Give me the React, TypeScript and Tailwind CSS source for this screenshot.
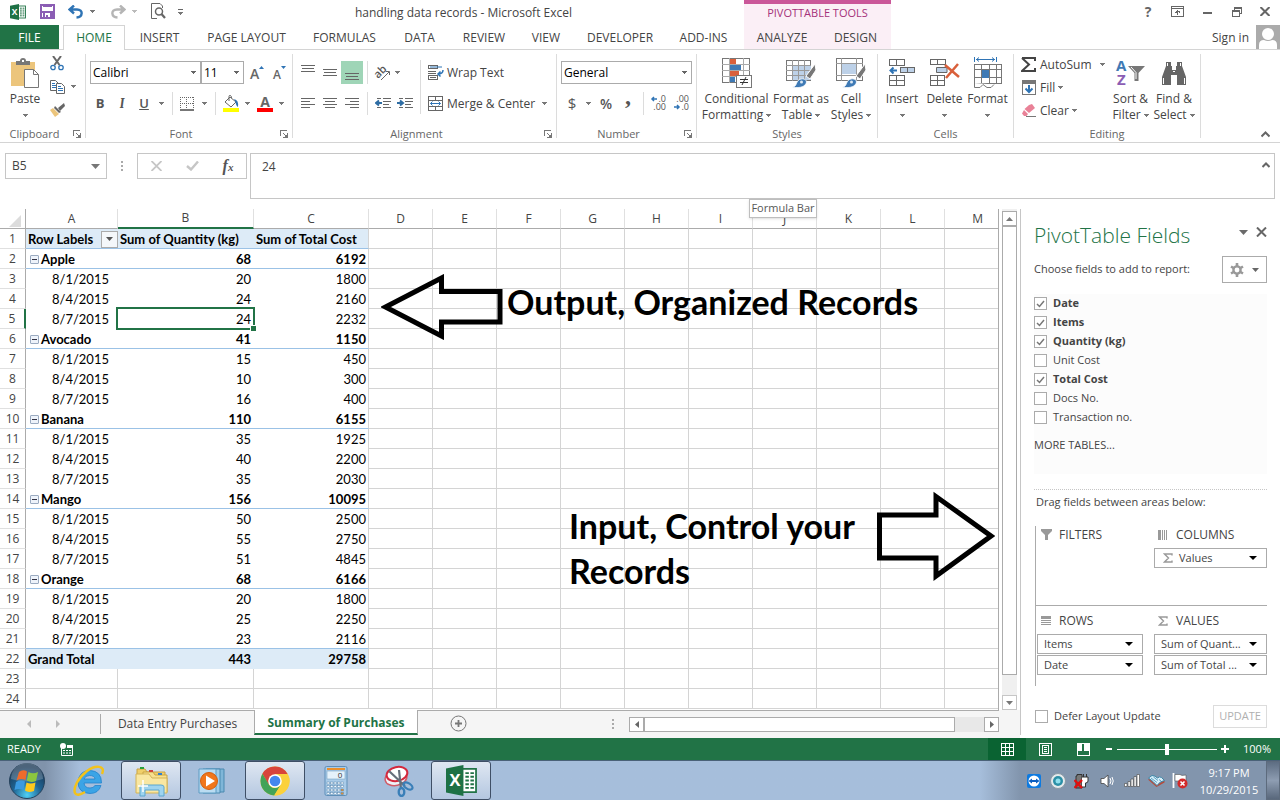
import React, { useState } from 'react';

const tabs = [
  { name: 'INSERT', width: 'w-[69px]' },
  { name: 'PAGE LAYOUT', width: 'w-[105px]' },
  { name: 'FORMULAS', width: 'w-[91px]' },
  { name: 'DATA', width: 'w-[59px]' },
  { name: 'REVIEW', width: 'w-[70px]' },
  { name: 'VIEW', width: 'w-[54px]' },
  { name: 'DEVELOPER', width: 'w-[94px]' },
  { name: 'ADD-INS', width: 'w-[73px]' },
];

const extraColumns = ['D', 'E', 'F', 'G', 'H', 'I', 'J', 'K', 'L', 'M'];

type Row = { kind: 'header' | 'group' | 'item' | 'total' | 'blank'; cells: string[] };

const rows: Row[] = [
  { kind: 'header', cells: ['Row Labels', 'Sum of Quantity (kg)', 'Sum of Total Cost'] },
  { kind: 'group', cells: ['Apple', '68', '6192'] },
  { kind: 'item', cells: ['8/1/2015', '20', '1800'] },
  { kind: 'item', cells: ['8/4/2015', '24', '2160'] },
  { kind: 'item', cells: ['8/7/2015', '24', '2232'] },
  { kind: 'group', cells: ['Avocado', '41', '1150'] },
  { kind: 'item', cells: ['8/1/2015', '15', '450'] },
  { kind: 'item', cells: ['8/4/2015', '10', '300'] },
  { kind: 'item', cells: ['8/7/2015', '16', '400'] },
  { kind: 'group', cells: ['Banana', '110', '6155'] },
  { kind: 'item', cells: ['8/1/2015', '35', '1925'] },
  { kind: 'item', cells: ['8/4/2015', '40', '2200'] },
  { kind: 'item', cells: ['8/7/2015', '35', '2030'] },
  { kind: 'group', cells: ['Mango', '156', '10095'] },
  { kind: 'item', cells: ['8/1/2015', '50', '2500'] },
  { kind: 'item', cells: ['8/4/2015', '55', '2750'] },
  { kind: 'item', cells: ['8/7/2015', '51', '4845'] },
  { kind: 'group', cells: ['Orange', '68', '6166'] },
  { kind: 'item', cells: ['8/1/2015', '20', '1800'] },
  { kind: 'item', cells: ['8/4/2015', '25', '2250'] },
  { kind: 'item', cells: ['8/7/2015', '23', '2116'] },
  { kind: 'total', cells: ['Grand Total', '443', '29758'] },
  { kind: 'blank', cells: ['', '', ''] },
  { kind: 'blank', cells: ['', '', ''] },
];

const initialFields = [
  { name: 'Date', checked: true },
  { name: 'Items', checked: true },
  { name: 'Quantity (kg)', checked: true },
  { name: 'Unit Cost', checked: false },
  { name: 'Total Cost', checked: true },
  { name: 'Docs No.', checked: false },
  { name: 'Transaction no.', checked: false },
];

/* ---------- small shared pieces ---------- */

const Caret = ({ className = 'text-[#777]' }: { className?: string }) => (
  <svg width="5" height="3" viewBox="0 0 5 3" className={`shrink-0 ${className}`} shapeRendering="crispEdges">
    <path d="M0 0H5V1H4V2H3V3H2V2H1V1H0Z" fill="currentColor" />
  </svg>
);

const BigCaret = ({ className = 'text-[#6a6a6a]' }: { className?: string }) => (
  <svg width="9" height="5" viewBox="0 0 9 5" className={`shrink-0 ${className}`}>
    <path d="M0 0H9L4.5 5Z" fill="currentColor" />
  </svg>
);

const CaretButton = ({ label, className }: { label: string; className: string }) => (
  <button aria-label={label} className={`flex h-[23px] shrink-0 items-center justify-center ${className}`}>
    <Caret />
  </button>
);

const IconButton = ({ label, className = '', children }: { label: string; className?: string; children: React.ReactNode }) => (
  <button aria-label={label} className={`flex h-[23px] shrink-0 items-center justify-center ${className}`}>
    {children}
  </button>
);

const Divider = ({ className = '' }: { className?: string }) => <span className={`w-px shrink-0 bg-[#dcdcdc] ${className}`} />;

const Combo = ({ label, value, className }: { label: string; value: string; className: string }) => (
  <div className={`relative flex h-[23px] shrink-0 items-center border border-[#ababab] bg-white ${className}`}>
    <select aria-label={label} defaultValue={value} className="h-full w-full appearance-none bg-transparent pl-[2px] text-xs text-black outline-none">
      <option>{value}</option>
    </select>
    <Caret className="pointer-events-none absolute right-1 text-[#666]" />
  </div>
);

const Group = ({ title, launcher, className, children }: { title: string; launcher?: boolean; className: string; children: React.ReactNode }) => (
  <>
    <section aria-label={title} className={`flex shrink-0 flex-col ${className}`}>
      <div className="flex h-[76px]">{children}</div>
      <div className="flex h-4 items-center text-[11px] text-[#666]">
        <span className="flex-1 text-center">{title}</span>
        {launcher && (
          <button aria-label={`${title} settings`} className="flex w-4 justify-center">
            <svg width="8" height="8" viewBox="0 0 8 8" fill="none" stroke="#777" shapeRendering="crispEdges">
              <path d="M0.5 6V0.5H7M3 3L6 6M7.5 3V7.5H3" />
              <path d="M7 4V7H4Z" fill="#777" stroke="none" />
            </svg>
          </button>
        )}
      </div>
    </section>
    <Divider className="my-1" />
  </>
);

const BigButton = ({ lines, className, children }: { lines: string[]; className: string; children: React.ReactNode }) => (
  <button className={`flex shrink-0 flex-col items-center whitespace-nowrap pt-2 text-xs leading-4 text-[#444] ${className}`}>
    <span className="mb-[3px] flex h-[30px] items-center">{children}</span>
    <span>{lines[0]}</span>
    <span className="flex h-4 items-center gap-[3px]">
      {lines[1]}
      <Caret />
    </span>
  </button>
);

/* ---------- icons ---------- */

const ExcelLogo = ({ size }: { size: number }) => (
  <svg width={size} height={size} viewBox="0 0 16 16">
    <rect x="8" y="2" width="7.5" height="12" fill="#fff" stroke="#217346" strokeWidth="0.9" />
    <path d="M10 4.2h1.8M12.6 4.2h1.8M10 6.1h1.8M12.6 6.1h1.8M10 8h1.8M12.6 8h1.8M10 9.9h1.8M12.6 9.9h1.8M10 11.8h1.8M12.6 11.8h1.8" stroke="#217346" strokeWidth="1" />
    <path d="M0 1.8L9 0V16L0 14.2Z" fill="#1e7145" />
    <text x="4.6" y="11" fontSize="8.5" fontWeight="700" textAnchor="middle" fill="#fff">X</text>
  </svg>
);

const AlignIcon = ({ lines }: { lines: [number, number][] }) => (
  <svg width="14" height="11" viewBox="0 0 14 11" shapeRendering="crispEdges">
    {lines.map(([x, w], i) => (
      <rect key={i} x={x} y={i * 3} width={w} height="1" fill="#666" />
    ))}
  </svg>
);

const ThreeLines = () => (
  <svg width="14" height="7" viewBox="0 0 14 7" shapeRendering="crispEdges">
    <path d="M0 0.5H14M1 3.5H13M0 6.5H14" stroke="#666" />
  </svg>
);

const IndentIcon = ({ flip }: { flip?: boolean }) => (
  <svg width="16" height="11" viewBox="0 0 16 11">
    <path d="M2 0.5H6M8 0.5H16M8 3.5H16M8 6.5H14M2 9.5H6M8 9.5H16" stroke="#666" shapeRendering="crispEdges" />
    <path d={flip ? 'M0 5H5M3 2.5L6 5L3 7.5' : 'M7 5H2M4 2.5L1 5L4 7.5'} stroke="#2e6da4" strokeWidth="2" fill="none" />
  </svg>
);

const Brush = () => (
  <>
    <path d="M29 6L20 18L24 21L30 12Z" fill="#777" stroke="#fff" />
    <path d="M6 29C12 29 9 22 15 21C20 20 22 24 19 27C16 30 10 30 6 29Z" fill="#3f7ab5" stroke="#fff" strokeWidth="0.8" />
    <circle cx="15.5" cy="24" r="1.5" fill="#dce8f4" />
  </>
);

const StartOrb = () => (
  <svg width="38" height="38" viewBox="0 0 38 38">
    <defs>
      <radialGradient id="orb" cx="50%" cy="90%" r="80%">
        <stop offset="0" stopColor="#4fd0f5" />
        <stop offset="0.5" stopColor="#1f6493" />
        <stop offset="1" stopColor="#1a3957" />
      </radialGradient>
    </defs>
    <circle cx="19" cy="19" r="17.5" fill="url(#orb)" stroke="#26425c" />
    <path d="M3 17A16 16 0 0 1 35 17Q19 22 3 17Z" fill="#fff" opacity="0.22" />
    <path d="M11 10Q15 7 19 9.5L17.5 18Q13 16 8.5 18.5Z" fill="#ee6b2c" />
    <path d="M20.5 10Q25 12.500 30 10L28 19Q23 21 18.8 18.5Z" fill="#8cc63f" />
    <path d="M8 20Q12.5 17.5 17 19.5L15.5 28Q11 26 6.500 28Z" fill="#3b9ae0" />
    <path d="M18.5 20.5Q22.500 22.5 27.5 20.5L26 29Q20 31 17 28.5Z" fill="#fcc91d" />
  </svg>
);

const IELogo = () => (
  <svg width="32" height="32" viewBox="0 0 32 32">
    <path d="M28.5 18H11Q11.5 23 17 23Q20.5 23 22 20.5H28Q25.5 28.5 17 28.5Q5 28 5 17Q6 5.5 17 5.5Q28.5 6 28.5 18ZM11 14H22Q21.5 10.5 16.5 10.5Q12 10.5 11 14Z" fill="#3ba4e6" stroke="#2383cb" strokeWidth="0.8" />
    <path d="M29 9C33 0 22 0 14 6C5 13 0 23 2 28C4 32 10 28 12 27" fill="none" stroke="#f2c21b" strokeWidth="2.5" />
  </svg>
);

const ExplorerIcon = () => (
  <svg width="34" height="32" viewBox="0 0 34 32">
    <path d="M3 4H11L13 7H31V26H3Z" fill="#f0cf6a" stroke="#c9a343" />
    <path d="M9 7H19L21 10H33V27H9Z" fill="#f7e08f" stroke="#c9a343" />
    <rect x="6" y="2" width="4" height="2" fill="#27a03c" />
    <rect x="15" y="5" width="4" height="2" fill="#d0413a" />
    <rect x="24" y="8" width="4" height="2" fill="#2d7fd3" />
    <path d="M2 9H15L18 13H33V28H2Z" fill="#f9e7a2" stroke="#d3b357" />
    <path d="M6 31V22Q6 20 9 20H27Q30 20 30 22V31H25V25H11V31Z" fill="#9fd4ef" stroke="#5ba6cf" />
    <path d="M9 15V27M4 21H14" stroke="#fff" strokeWidth="1.5" />
  </svg>
);

const MediaIcon = () => (
  <svg width="30" height="28" viewBox="0 0 30 28">
    <path d="M8 2H26V25H8Z" fill="#7fb6d8" stroke="#4b89b0" />
    <path d="M5 2H22V26H5Z" fill="#9fcdea" stroke="#4b89b0" />
    <path d="M1 2H18V26H1Z" fill="#badcf2" stroke="#5d9cc3" />
    <circle cx="11" cy="14" r="8.5" fill="#f0761b" stroke="#d65f0c" />
    <path d="M8 8.5L17 14L8 19.5Z" fill="#fff" />
  </svg>
);

const ChromeLogo = () => (
  <svg width="30" height="30" viewBox="0 0 30 30">
    <circle cx="15" cy="15" r="14.5" fill="#fbd13c" />
    <path d="M2.4 7.8A14.5 14.5 0 0 1 27.7 8.2H15L8.7 18.7Z" fill="#d8443a" />
    <path d="M2.4 7.8A14.5 14.5 0 0 0 14.2 29.5L21 18.5A7 7 0 0 1 8.9 18.6Z" fill="#43a358" />
    <path d="M15 8H27.7A14.5 14.5 0 0 1 14.2 29.5L21 18.5Z" fill="#fbd13c" />
    <circle cx="15" cy="15" r="6.8" fill="#fff" />
    <circle cx="15" cy="15" r="5.3" fill="#4587ee" />
  </svg>
);

const CalcIcon = () => (
  <svg width="24" height="30" viewBox="0 0 24 30">
    <rect x="1" y="0.5" width="22" height="29" rx="1.5" fill="#a9cbe8" stroke="#5e8fb8" />
    <rect x="3" y="2" width="18" height="2" fill="#e98f2d" />
    <rect x="3" y="5" width="18" height="8" fill="#e6f2fb" stroke="#7ba3c4" strokeWidth="0.6" />
    <text x="16" y="12" fontSize="8" textAnchor="middle" fill="#333">0</text>
    {[16, 19.5, 23, 26.5].map((y) =>
      [3, 6.5, 10, 13.5, 17].map((x) => (
        <rect key={`${x}-${y}`} x={x} y={y} width="2.5" height="2" fill={x === 17 && y > 20 ? '#e98f2d' : '#f5faff'} stroke="#5b86aa" strokeWidth="0.5" />
      ))
    )}
  </svg>
);

const SnipIcon = () => (
  <svg width="32" height="32" viewBox="0 0 32 32">
    <ellipse cx="13" cy="13" rx="11" ry="7.5" fill="#eef2f8" stroke="#d15c68" strokeWidth="1.5" transform="rotate(-12 13 13)" />
    <ellipse cx="14" cy="9" rx="10.5" ry="7" fill="#fff" stroke="#d4283c" strokeWidth="2" transform="rotate(-12 14 9)" />
    <path d="M6 6L22 21M16 5L18 24" stroke="#666f7b" strokeWidth="2.2" />
    <ellipse cx="25" cy="21" rx="5" ry="2.8" fill="none" stroke="#3a7fb8" strokeWidth="2.3" transform="rotate(32 25 21)" />
    <ellipse cx="18.5" cy="27" rx="2.8" ry="4" fill="none" stroke="#3a7fb8" strokeWidth="2.3" />
  </svg>
);

/* ---------- title bar and ribbon ---------- */

const TitleBar = () => (
  <header className="flex h-[25px] shrink-0 text-[#444]">
    <div className="flex w-[744px] shrink-0 items-center">
      <div className="flex items-center pb-[2px] pl-[10px]">
        <span className="flex w-4"><ExcelLogo size={16} /></span>
        <button aria-label="Save" className="ml-[13px] flex w-4 justify-center">
          <svg width="15" height="15" viewBox="0 0 15 15" shapeRendering="crispEdges">
            <path d="M1 1H14V14H1Z" fill="#fff" stroke="#8b5db4" strokeWidth="2" />
            <path d="M3 1H12V3H3ZM2 7H13V9H2ZM3 9H5V14H3ZM10 9H13V14H10ZM6 11H8V14H6Z" fill="#8b5db4" />
          </svg>
        </button>
        <button aria-label="Undo" className="ml-[13px] flex w-4">
          <svg width="16" height="14" viewBox="0 0 16 14" fill="none" stroke="#2f74b5" strokeWidth="2.4">
            <path d="M6 0.5L1.5 4.5L6 8.5M1.5 4.5H9C15.5 4.5 15 12 8.5 12.5" />
          </svg>
        </button>
        <CaretButton label="Undo list" className="ml-[6px] w-[5px]" />
        <button aria-label="Redo" className="ml-[15px] flex w-4">
          <svg width="16" height="14" viewBox="0 0 16 14" fill="none" stroke="#b5b5b5" strokeWidth="2.4">
            <path d="M10 0.5L14.5 4.5L10 8.5M14.5 4.5H7C0.5 4.5 1 12 7.5 12.5" />
          </svg>
        </button>
        <span className="ml-[6px] flex"><Caret className="text-[#bbb]" /></span>
        <button aria-label="Print preview" className="ml-[14px] flex">
          <svg width="15" height="17" viewBox="0 0 15 17" fill="none" stroke="#666">
            <path d="M11.5 5V3L9 0.5H0.5V15.5H6" />
            <circle cx="8" cy="8.5" r="3.5" strokeWidth="1.5" fill="#fff" />
            <path d="M10.5 11L14 15" strokeWidth="2.2" />
          </svg>
        </button>
        <button aria-label="Customize toolbar" className="ml-3 flex flex-col items-center gap-[2px]">
          <span className="h-px w-[5px] bg-[#666]" />
          <Caret />
        </button>
      </div>
      <h1 className="flex-1 text-center text-xs">handling data records - Microsoft Excel</h1>
    </div>
    <div className="w-[147px] shrink-0 border-t-4 border-[#ca5799] bg-[#fbeff6] text-center text-[11px] leading-[18px] text-[#a5327a]">PIVOTTABLE TOOLS</div>
    <div className="ml-auto flex items-center pb-[2px] pr-px text-[#666]">
      <button aria-label="Help" className="flex w-[30px] justify-center text-sm font-bold leading-4">?</button>
      <button aria-label="Ribbon display options" className="flex w-[29px] justify-center">
        <svg width="13" height="11" viewBox="0 0 13 11" fill="none" stroke="#666" shapeRendering="crispEdges">
          <path d="M0.5 0.5H12.5V10.5H0.5ZM0 2.5H13M6.5 9V4M4 6.5H5V5.5H8V6.5H9" />
        </svg>
      </button>
      <button aria-label="Minimize" className="flex w-[30px] justify-center"><span className="mt-[3px] h-[2px] w-[9px] bg-[#666]" /></button>
      <button aria-label="Restore" className="flex w-[29px] justify-center">
        <svg width="10" height="10" viewBox="0 0 10 10" fill="none" stroke="#666" shapeRendering="crispEdges">
          <path d="M2.5 3V0.5H9.5V6.5H7.5M2 1.5H10M0.5 3.5H7.5V9.5H0.5ZM0 4.5H8" />
        </svg>
      </button>
      <button aria-label="Close" className="flex w-[28px] justify-center">
        <svg width="10" height="9" viewBox="0 0 10 9" stroke="#666" strokeWidth="2"><path d="M0.5 0L9.5 9M9.5 0L0.5 9" /></svg>
      </button>
    </div>
  </header>
);

const TabBar = () => (
  <nav className="flex h-[25px] shrink-0 border-b border-[#d4d4d4] text-xs text-[#444]">
    <div className="flex w-[744px] shrink-0">
      <button className="w-[59px] bg-[#217346] pt-px text-white">FILE</button>
      <button className="-mb-px ml-1 w-[62px] border border-b-0 border-[#d4d4d4] bg-white text-[#217346]">HOME</button>
      {tabs.map((tab) => (
        <button key={tab.name} className={`whitespace-nowrap pt-px ${tab.width}`}>{tab.name}</button>
      ))}
    </div>
    <div className="flex w-[147px] shrink-0 bg-[#fbeff6]">
      <button className="w-[76px] pt-px">ANALYZE</button>
      <button className="w-[71px] pt-px">DESIGN</button>
    </div>
    <div className="ml-auto flex items-center gap-[7px]">
      <a href="#signin" className="pt-px">Sign in</a>
      <svg width="24" height="24" viewBox="0 0 24 24">
        <rect width="24" height="24" fill="#ababab" />
        <circle cx="12" cy="9" r="6" fill="#fff" />
        <path d="M3 24V20Q3 15 8 15Q12 17 16 15Q21 15 21 20V24Z" fill="#fff" />
      </svg>
    </div>
  </nav>
);

const ClipboardGroup = () => (
  <Group title="Clipboard" launcher className="w-[85px]">
    <BigButton lines={['Paste', '']} className="w-[50px]">
      <svg width="30" height="30" viewBox="0 0 30 30">
        <path d="M1 4H25V28H1Z" fill="#ecc57c" />
        <path d="M6 7V3H10Q10 0 13 0Q16 0 16 3H20V7Z" fill="#777" />
        <rect x="12" y="2" width="2" height="2" fill="#fff" />
        <path d="M14.5 11.5H23.5L28.5 16.5V29.5H14.5Z" fill="#fff" stroke="#777" />
        <path d="M23.5 11.5V16.5H28.5" fill="none" stroke="#777" />
      </svg>
    </BigButton>
    <div className="flex flex-col pt-[2px]">
      <IconButton label="Cut" className="w-[14px]">
        <svg width="14" height="15" viewBox="0 0 14 15" fill="none">
          <path d="M3 0L9.5 9M11 0L4.5 9" stroke="#666" strokeWidth="2" />
          <circle cx="3" cy="11.5" r="2.2" stroke="#2f74b5" strokeWidth="1.3" />
          <circle cx="11" cy="11.5" r="2.2" stroke="#2f74b5" strokeWidth="1.3" />
        </svg>
      </IconButton>
      <div className="flex">
        <IconButton label="Copy" className="w-[14px]">
          <svg width="15" height="14" viewBox="0 0 15 14" fill="#fff" stroke="#666" className="shrink-0">
            <path d="M0.5 0.5H5.5L8.5 3.5V10.5H0.5Z" />
            <path d="M2 3.5H5M2 5.5H6M2 7.5H6" stroke="#2f74b5" />
            <path d="M6.5 3.5H11.5L14.5 6.5V13.5H6.5Z" />
            <path d="M8 6.5H11M8 8.5H13M8 10.5H13" stroke="#2f74b5" />
          </svg>
        </IconButton>
        <CaretButton label="Copy options" className="ml-1 w-[11px]" />
      </div>
      <IconButton label="Format painter" className="w-[14px]">
        <svg width="15" height="14" viewBox="0 0 15 14" className="shrink-0">
          <path d="M14 0L15 3L10 8L8 5Z" fill="#666" />
          <path d="M5 3L11 9L9 10L4 5Z" fill="#666" />
          <path d="M3 5L9 11L5 14L0 7Z" fill="#ecc57c" />
        </svg>
      </IconButton>
    </div>
  </Group>
);

const FontGroup = () => (
  <Group title="Font" launcher className="w-[206px]">
    <div className="flex flex-col gap-2 pt-[11px]">
      <div className="flex pl-1">
        <Combo label="Font" value="Calibri" className="w-[111px]" />
        <Combo label="Font size" value="11" className="w-[43px]" />
        <IconButton label="Increase font size" className="ml-[2px] w-[22px]">
          <svg width="14" height="14" viewBox="0 0 14 14" className="overflow-visible">
            <text x="0" y="13" fontSize="14" fontWeight="600" fill="#666">A</text>
            <path d="M9 3L11.5 0L14 3Z" fill="#2f74b5" />
          </svg>
        </IconButton>
        <IconButton label="Decrease font size" className="w-[22px]">
          <svg width="13" height="14" viewBox="0 0 13 14" className="overflow-visible">
            <text x="0" y="13" fontSize="12" fontWeight="600" fill="#666">A</text>
            <path d="M8 0H13L10.5 3Z" fill="#2f74b5" />
          </svg>
        </IconButton>
      </div>
      <div className="flex pl-[3px] text-[#555]">
        <IconButton label="Bold" className="w-[22px] text-[13px] font-bold">B</IconButton>
        <IconButton label="Italic" className="w-[22px] font-serif text-[13px] font-bold italic">I</IconButton>
        <IconButton label="Underline" className="w-[22px] text-[13px] font-semibold underline">U</IconButton>
        <CaretButton label="Underline options" className="w-3" />
        <Divider className="mx-[5px]" />
        <IconButton label="Borders" className="w-[18px]">
          <svg width="14" height="14" viewBox="0 0 14 14" stroke="#666" shapeRendering="crispEdges">
            <path d="M0 0.5H14M0 6.5H14M0.5 0V13M6.5 0V13M13.5 0V13" strokeDasharray="1 1" />
            <path d="M0 13H14" strokeWidth="2" stroke="#777" />
          </svg>
        </IconButton>
        <CaretButton label="Border options" className="w-4" />
        <Divider className="ml-[3px] mr-[5px]" />
        <IconButton label="Fill color" className="w-5">
          <svg width="17" height="17" viewBox="0 0 17 17">
            <path d="M2 7L7 2L13 7L8 12Z" fill="#fff" stroke="#666" />
            <path d="M6 6V1.5Q6 0 7.5 0.5Q8.5 1 8.5 3" fill="none" stroke="#666" />
            <path d="M11 4Q16 5 15 12Q13 11 12.5 7Z" fill="#2f74b5" />
            <rect y="13" width="16" height="4" fill="#ff0" />
          </svg>
        </IconButton>
        <CaretButton label="Fill options" className="w-3" />
        <IconButton label="Font color" className="ml-[2px] w-5">
          <svg width="16" height="17" viewBox="0 0 16 17" className="overflow-visible">
            <text x="8" y="12" fontSize="14" fontWeight="700" textAnchor="middle" fill="#666">A</text>
            <rect y="13" width="16" height="4" fill="#f00" />
          </svg>
        </IconButton>
        <CaretButton label="Font color options" className="w-3" />
      </div>
    </div>
  </Group>
);

const AlignmentGroup = () => (
  <Group title="Alignment" launcher className="w-[263px]">
    <div className="flex flex-col gap-2 pl-1 pt-[11px]">
      <div className="flex">
        <IconButton label="Top align" className="w-[22px] pb-2"><ThreeLines /></IconButton>
        <IconButton label="Middle align" className="w-[22px]"><ThreeLines /></IconButton>
        <IconButton label="Bottom align" className="w-[22px] bg-[#9fd5b7] pt-2"><ThreeLines /></IconButton>
        <Divider className="ml-1 mr-[6px]" />
        <IconButton label="Orientation" className="w-[18px]">
          <svg width="17" height="16" viewBox="0 0 17 16" className="overflow-visible">
            <text x="0" y="11" fontSize="11" fontWeight="600" fill="#555" transform="rotate(-45 5 9)">ab</text>
            <path d="M6 15L14 7M11 6.5H14.5V10" fill="none" stroke="#666" />
          </svg>
        </IconButton>
        <CaretButton label="Orientation options" className="w-[10px]" />
      </div>
      <div className="flex">
        <IconButton label="Align left" className="w-[22px]"><AlignIcon lines={[[0, 14], [0, 9], [0, 14], [0, 9]]} /></IconButton>
        <IconButton label="Center" className="w-[22px]"><AlignIcon lines={[[0, 14], [2, 10], [0, 14], [2, 10]]} /></IconButton>
        <IconButton label="Align right" className="w-[22px]"><AlignIcon lines={[[0, 14], [5, 9], [0, 14], [5, 9]]} /></IconButton>
        <Divider className="mx-1" />
        <IconButton label="Decrease indent" className="w-[22px]"><IndentIcon /></IconButton>
        <IconButton label="Increase indent" className="w-[22px]"><IndentIcon flip /></IconButton>
      </div>
    </div>
    <Divider className="mb-3 ml-1 mt-[10px]" />
    <div className="flex flex-col gap-2 pl-[7px] pt-[11px] text-xs text-[#444]">
      <button className="flex h-[23px] items-center gap-[3px]">
        <svg width="16" height="15" viewBox="0 0 16 15" fill="none" stroke="#666">
          <path d="M0.5 0.5H9.5V3.5H0.5ZM0 6.5H8M0 8.5H8M0.5 10.5H9.5V14.5H0.5ZM2 12.5H8" shapeRendering="crispEdges" />
          <path d="M2 2H14" stroke="#2f74b5" />
          <path d="M15 5Q15 9 10 9M12.5 6.5L10 9L12.5 11.5" stroke="#2f74b5" strokeWidth="1.5" />
        </svg>
        Wrap Text
      </button>
      <div className="flex">
        <button className="flex h-[23px] items-center gap-[3px] whitespace-nowrap">
          <svg width="16" height="15" viewBox="0 0 16 15" fill="none" stroke="#666">
            <path d="M0.5 0.5H14.5V14.5H0.5ZM0 4.5H15M0 10.5H15M7.5 0V4M7.5 11V14" shapeRendering="crispEdges" />
            <path d="M2.5 7.5H12.5M4.5 5.5L2.5 7.5L4.5 9.5M10.5 5.5L12.5 7.5L10.5 9.5" stroke="#2f74b5" />
          </svg>
          Merge &amp; Center
        </button>
        <CaretButton label="Merge options" className="ml-1 w-[10px]" />
      </div>
    </div>
  </Group>
);

const NumberGroup = () => (
  <Group title="Number" launcher className="w-[139px]">
    <div className="flex flex-col gap-2 pl-1 pt-[11px] text-[#555]">
      <Combo label="Number format" value="General" className="w-[131px]" />
      <div className="flex">
        <IconButton label="Currency" className="w-[22px] text-[15px]">$</IconButton>
        <CaretButton label="Currency options" className="w-[10px]" />
        <IconButton label="Percent" className="w-[26px] text-sm font-semibold">%</IconButton>
        <IconButton label="Comma style" className="w-[18px] pb-4 font-['Liberation_Serif',serif] text-2xl font-bold">,</IconButton>
        <Divider className="ml-[6px] mr-[2px]" />
        <IconButton label="Increase decimal" className="w-6">
          <svg width="16" height="15" viewBox="0 0 16 15" fontSize="9" fill="#555" className="overflow-visible">
            <text x="16" y="6" textAnchor="end">.0</text>
            <text x="16" y="14" textAnchor="end">.00</text>
            <path d="M7 3H2M4 1L2 3L4 5" fill="none" stroke="#2f74b5" strokeWidth="1.5" />
          </svg>
        </IconButton>
        <IconButton label="Decrease decimal" className="w-[22px]">
          <svg width="16" height="15" viewBox="0 0 16 15" fontSize="9" fill="#555" className="overflow-visible">
            <text x="16" y="6" textAnchor="end">.00</text>
            <text x="16" y="14" textAnchor="end">.0</text>
            <path d="M1 11H6M4 9L6 11L4 13" fill="none" stroke="#2f74b5" strokeWidth="1.5" />
          </svg>
        </IconButton>
      </div>
    </div>
  </Group>
);

const StylesGroup = () => (
  <Group title="Styles" className="w-[180px]">
    <BigButton lines={['Conditional', 'Formatting']} className="ml-[3px] w-[73px]">
      <svg width="30" height="30" viewBox="0 0 30 30" shapeRendering="crispEdges">
        <rect x="0.5" y="0.5" width="27" height="24" fill="#fff" stroke="#777" />
        <path d="M0 6.5H28M0 12.5H28M0 18.5H28M7.5 0V25M21.5 0V25" stroke="#aaa" />
        <rect x="8" y="1" width="6" height="5" fill="#d9603b" />
        <rect x="8" y="7" width="11" height="5" fill="#3f7ab5" />
        <rect x="8" y="13" width="9" height="5" fill="#d9603b" />
        <rect x="8" y="19" width="5" height="5" fill="#3f7ab5" />
        <rect x="14.5" y="17.5" width="15" height="12" fill="#fff" stroke="#777" />
        <path d="M18 21.5H26M18 24.5H26M24 19L20 27" stroke="#333" shapeRendering="auto" />
      </svg>
    </BigButton>
    <BigButton lines={['Format as', 'Table']} className="w-14">
      <svg width="30" height="30" viewBox="0 0 30 30">
        <rect x="0.5" y="2.5" width="24" height="20" fill="#fff" stroke="#777" />
        <rect x="7" y="8" width="18" height="14" fill="#bdd1e8" />
        <path d="M0 7.5H25M0 12.5H25M0 17.5H25M6.5 2V23M12.5 2V23M18.5 2V23" stroke="#999" />
        <Brush />
      </svg>
    </BigButton>
    <BigButton lines={['Cell', 'Styles']} className="w-11">
      <svg width="30" height="30" viewBox="0 0 30 30">
        <rect x="0.5" y="0.5" width="26" height="22" fill="#fff" stroke="#777" />
        <path d="M0 5.5H27M0 17.5H27M5.5 0V23M20.5 0V23" stroke="#999" />
        <rect x="6" y="6" width="14" height="10" fill="#bdd1e8" />
        <Brush />
      </svg>
    </BigButton>
  </Group>
);

const CellsGroup = () => (
  <Group title="Cells" className="w-[135px]">
    <BigButton lines={['Insert', '']} className="ml-[2px] w-11">
      <svg width="28" height="28" viewBox="0 0 28 28" fill="none" stroke="#666" shapeRendering="crispEdges">
        <path d="M1.5 0.5H16.5V6.5H1.5ZM8.5 0V6M1.5 16.5H16.5V26.5H1.5ZM8.5 16V27M1 21.5H17" />
        <path d="M12.5 8.5H26.5V13.5H12.5ZM19.5 8V14" fill="#bdd1e8" />
        <path d="M9 11.5H3M5.5 8.5L2.5 11.5L5.5 14.5" stroke="#2f74b5" strokeWidth="2" shapeRendering="auto" />
      </svg>
    </BigButton>
    <BigButton lines={['Delete', '']} className="w-[41px]">
      <svg width="30" height="28" viewBox="0 0 30 28" fill="none" stroke="#666">
        <path d="M0.5 0.5H15.5V5.5H0.5ZM7.5 0V5M0.5 16.5H14.5V26.5H0.5ZM7.5 16V27M0 21.5H15" shapeRendering="crispEdges" />
        <path d="M6.5 8.5H17V13.5H6.5Z" fill="#bdd1e8" />
        <path d="M15 6L29 18M28 5L16 19" stroke="#d9603b" strokeWidth="2.5" />
      </svg>
    </BigButton>
    <BigButton lines={['Format', '']} className="w-[45px]">
      <svg width="28" height="32" viewBox="0 0 28 32" fill="none" stroke="#777" shapeRendering="crispEdges">
        <path d="M0.500 7.5H27.5V26.5H0.5ZM0 12.5H28M0 20.5H28M7.5 7V27M15.5 7V27M22.5 7V27" />
        <path d="M0.5 26V30.5H6L9 27.5L13 30.5H17L20 27.5" fill="#fff" shapeRendering="auto" />
        <rect x="8" y="13" width="7" height="8" fill="#3f7ab5" stroke="none" />
        <path d="M0.5 0V5M22.5 0V5M2 2.5H21M5 0.5L2.5 2.5L5 4.5M18 0.5L20.5 2.5L18 4.5" stroke="#2f74b5" shapeRendering="auto" />
      </svg>
    </BigButton>
  </Group>
);

const EditingGroup = () => (
  <Group title="Editing" className="w-[186px]">
    <div className="flex w-[95px] flex-col pl-[7px] pt-[3px] text-xs text-[#444]">
      <div className="flex h-[23px] items-center">
        <button className="flex items-center gap-[3px]">
          <svg width="16" height="15" viewBox="0 0 16 15">
            <path d="M1 1H14V4M1 1L8 7.5L1 14H14V11" fill="none" stroke="#444" strokeWidth="2" />
          </svg>
          AutoSum
        </button>
        <CaretButton label="AutoSum options" className="ml-auto mr-[2px] w-[10px]" />
      </div>
      <button className="flex h-[23px] items-center gap-[3px]">
        <svg width="16" height="15" viewBox="0 0 16 15">
          <rect x="1.5" y="0.5" width="13" height="14" fill="#fff" stroke="#777" />
          <rect x="1" width="14" height="4" fill="#777" />
          <path d="M8 5V12M4.5 8.5L8 12L11.5 8.5" fill="none" stroke="#2f74b5" strokeWidth="2" />
        </svg>
        Fill <Caret />
      </button>
      <button className="flex h-[23px] items-center gap-[3px]">
        <svg width="16" height="13" viewBox="0 0 16 13">
          <path d="M8 1L11 0L14 4L8 9L3.5 5Z" fill="#e98197" />
          <path d="M3 6L7 10L5.5 12H3L1 9.5Z" fill="#e98197" />
          <path d="M5 12.5H15" stroke="#777" />
        </svg>
        Clear <Caret />
      </button>
    </div>
    <BigButton lines={['Sort &', 'Filter']} className="w-[43px]">
      <svg width="30" height="28" viewBox="0 0 30 28" className="overflow-visible">
        <text x="0" y="12" fontSize="15" fontWeight="700" fill="#3f7ab5">A</text>
        <text x="1" y="26" fontSize="15" fontWeight="700" fill="#8b5db4">Z</text>
        <path d="M12 7H29L22.5 14V22H18.5V14Z" fill="#777" />
        <path d="M15 8L20 13.5V20" fill="none" stroke="#fff" />
      </svg>
    </BigButton>
    <BigButton lines={['Find &', 'Select']} className="w-11">
      <svg width="28" height="25" viewBox="0 0 28 25" fill="#666">
        <path d="M6 1H11V5H12V9H16V5H17V1H22V5L26 16V24H17V14H11V24H2V16L6 5Z" />
        <path d="M7.5 2V5M20.5 2V5M3.5 17V23M24.5 17V23M13 10.5H15" stroke="#fff" />
      </svg>
    </BigButton>
  </Group>
);

const Ribbon = () => (
  <div className="flex h-[93px] shrink-0 border-b border-[#d4d4d4]">
    <ClipboardGroup />
    <FontGroup />
    <AlignmentGroup />
    <NumberGroup />
    <StylesGroup />
    <CellsGroup />
    <EditingGroup />
    <button aria-label="Collapse ribbon" className="mb-1 ml-auto mr-[10px] flex items-end">
      <svg width="9" height="7" viewBox="0 0 9 7" fill="none" stroke="#666" strokeWidth="2"><path d="M0.5 5.5L4.5 1.5L8.5 5.5" /></svg>
    </button>
  </div>
);

const FormulaBar = () => (
  <div className="relative flex h-[66px] shrink-0 items-start px-[5px] pt-[10px] text-xs text-[#444]">
    <div className="flex h-[26px] w-[102px] items-center border border-[#c6c6c6] pr-[6px]">
      <input aria-label="Name box" defaultValue="B5" className="w-full min-w-0 pl-[6px] outline-none" />
      <BigCaret className="text-[#777]" />
    </div>
    <div className="mx-[14px] flex h-[26px] w-[2px] flex-col justify-center gap-[2px]">
      <span className="h-[2px] bg-[#aaa]" />
      <span className="h-[2px] bg-[#aaa]" />
      <span className="h-[2px] bg-[#aaa]" />
    </div>
    <div className="flex h-[26px] w-[110px] items-center border border-[#c6c6c6]">
      <button aria-label="Cancel" className="flex w-9 justify-center">
        <svg width="11" height="10" viewBox="0 0 11 10" stroke="#c6c6c6" strokeWidth="1.8"><path d="M0.5 0L10.5 10M10.5 0L0.5 10" /></svg>
      </button>
      <button aria-label="Enter" className="flex w-9 justify-center">
        <svg width="13" height="10" viewBox="0 0 13 10" fill="none" stroke="#c6c6c6" strokeWidth="2.4"><path d="M1 5L5 8.5L12 0.5" /></svg>
      </button>
      <button aria-label="Insert function" className="w-9 font-['Liberation_Serif',serif] text-base font-bold italic leading-4 text-[#555]">
        f<span className="text-[11px]">x</span>
      </button>
    </div>
    <div className="ml-[3px] flex h-[46px] flex-1 items-start border border-[#c6c6c6]">
      <input aria-label="Formula" defaultValue="24" className="h-[25px] min-w-0 flex-1 pl-[11px] outline-none" />
      <button aria-label="Collapse formula bar" className="mr-1 mt-2 flex">
        <svg width="8" height="6" viewBox="0 0 8 6" fill="none" stroke="#666" strokeWidth="2"><path d="M0.5 5L4 1.5L7.5 5" /></svg>
      </button>
    </div>
    <div role="tooltip" className="absolute left-[749px] top-[56px] z-10 flex h-[19px] w-[68px] items-center justify-center whitespace-nowrap border border-[#bebebe] bg-white text-[11px] text-[#575757] shadow-sm">Formula Bar</div>
  </div>
);

/* ---------- worksheet ---------- */

const borderFor = (row: Row, next?: Row) => {
  if (row.kind === 'header' || row.kind === 'group' || next?.kind === 'total') return 'border-b border-b-[#9bc2e6]';
  if (row.kind === 'blank') return 'border-b border-r border-b-[#d4d4d4] border-r-[#d4d4d4]';
  return '';
};

const Sheet = () => (
  <div className="relative min-w-0 flex-1 overflow-hidden border-r border-[#ababab]">
    <table className="w-full table-fixed border-separate border-spacing-0 font-['Lato','Liberation_Sans',sans-serif] text-[13px] leading-[18px] text-black">
      <colgroup>
        <col className="w-[26px]" />
        <col className="w-[92px]" />
        <col className="w-[136px]" />
        <col className="w-[115px]" />
        {extraColumns.map((c) => (
          <col key={c} className={c === 'M' ? '' : 'w-[64px]'} />
        ))}
      </colgroup>
      <thead className="font-['Open_Sans','Noto_Sans',sans-serif] text-xs text-[#444]">
        <tr className="h-5">
          <th aria-label="Select all" className="border-b border-r border-[#ababab] p-0">
            <svg width="12" height="12" viewBox="0 0 12 12" className="ml-auto mr-1 mt-1"><path d="M12 0V12H0Z" fill="#dcdcdc" /></svg>
          </th>
          {['A', 'B', 'C'].map((c) => (
            <th key={c} className={`border-r border-r-[#e0e0e0] p-0 font-normal ${c === 'B' ? 'border-b-2 border-b-[#217346]' : 'border-b border-b-[#ababab]'}`}>{c}</th>
          ))}
          {extraColumns.map((c) => (
            <th key={c} className={`border-b border-b-[#ababab] p-0 font-normal ${c === 'M' ? 'pr-[15px] text-right' : 'border-r border-r-[#e0e0e0]'}`}>{c}</th>
          ))}
        </tr>
      </thead>
      <tbody>
        {rows.map((row, i) => {
          const edge = borderFor(row, rows[i + 1]);
          const bold = row.kind !== 'item' ? 'font-bold' : '';
          const fill = row.kind === 'header' || row.kind === 'total' ? 'bg-[#ddebf7]' : '';
          const selected = i === 4;
          return (
            <tr key={i} className="h-5">
              <th className={`border-b border-b-[#e0e0e0] p-0 text-center font-['Open_Sans','Noto_Sans',sans-serif] text-xs font-normal leading-[19px] text-[#444] ${selected ? 'border-r-2 border-r-[#217346]' : 'border-r border-r-[#ababab]'}`}>{i + 1}</th>
              <td className={`h-5 whitespace-nowrap p-0 pt-px align-top ${edge} ${bold} ${fill}`}>
                {row.kind === 'header' && (
                  <div className="flex h-[18px] items-center justify-between pl-[2px]">
                    {row.cells[0]}
                    <button aria-label="Filter row labels" className="flex h-[17px] w-[17px] items-center justify-center border border-[#ababab] bg-[#f4f7fa]">
                      <svg width="7" height="4" viewBox="0 0 7 4"><path d="M0 0H7L3.5 4Z" fill="#555" /></svg>
                    </button>
                  </div>
                )}
                {row.kind === 'group' && (
                  <div className="flex items-center gap-[2px] pl-1">
                    <button aria-label={`Collapse ${row.cells[0]}`} className="flex h-[9px] w-[9px] items-center justify-center rounded-[1px] border border-[#9aaac0] bg-[#eef3fa]">
                      <span className="h-px w-[5px] bg-[#334]" />
                    </button>
                    {row.cells[0]}
                  </div>
                )}
                {row.kind === 'item' && <div className="pl-[26px]">{row.cells[0]}</div>}
                {row.kind === 'total' && <div className="pl-[2px]">{row.cells[0]}</div>}
              </td>
              <td className={`relative whitespace-nowrap p-0 pt-px align-top ${row.kind === 'header' ? 'pl-[2px]' : 'pr-[3px] text-right'} ${edge} ${bold} ${fill}`}>
                {row.cells[1]}
                {selected && (
                  <span className="absolute -bottom-px -left-[2px] -right-px -top-[2px] border-2 border-[#217346]">
                    <span className="absolute -bottom-[3px] -right-[3px] h-[6px] w-[6px] border-l border-t border-white bg-[#217346]" />
                  </span>
                )}
              </td>
              <td className={`whitespace-nowrap border-r border-r-[#d4d4d4] p-0 pt-px align-top ${row.kind === 'header' ? 'pl-[2px]' : 'pr-[2px] text-right'} ${edge} ${bold} ${fill}`}>{row.cells[2]}</td>
              {extraColumns.map((c) => (
                <td key={c} className={`border-b border-[#d4d4d4] p-0 ${c === 'M' ? '' : 'border-r'}`} />
              ))}
            </tr>
          );
        })}
      </tbody>
    </table>

    {/* drawn notes sit on top of the cells */}
    <svg width="122" height="66" viewBox="0 0 122 66" className="absolute left-[381px] top-[65px]">
      <path d="M4.5 33L60.5 4V17.5H119V48H60.5V62Z" fill="none" stroke="#000" strokeWidth="5" />
    </svg>
    <p className="absolute left-[507px] top-[72px] whitespace-nowrap font-['Lato','Liberation_Sans',sans-serif] text-[34px] font-bold leading-[42px] text-black">Output, Organized Records</p>
    <p className="absolute left-[569px] top-[294px] whitespace-nowrap font-['Lato','Liberation_Sans',sans-serif] text-[34px] font-bold leading-[45px] text-black">
      Input, Control your<br />Records
    </p>
    <svg width="118" height="92" viewBox="0 0 118 92" className="absolute left-[877px] top-[281px]">
      <path d="M2.5 25H59V6.5L114 46L59 86V68H2.5Z" fill="none" stroke="#000" strokeWidth="5" />
    </svg>
  </div>
);

const VerticalScroll = () => (
  <div className="ml-[3px] flex w-[15px] shrink-0 flex-col bg-[#f0f0f0] pt-[2px]">
    <button aria-label="Scroll up" className="flex h-[15px] items-center justify-center border border-[#ababab] bg-white">
      <svg width="7" height="4" viewBox="0 0 7 4"><path d="M0 4H7L3.5 0Z" fill="#777" /></svg>
    </button>
    <span className="flex-1 border border-[#ababab] bg-white" />
    <span className="h-5" />
    <button aria-label="Scroll down" className="flex h-[15px] items-center justify-center border border-[#c6c6c6] bg-white">
      <svg width="7" height="4" viewBox="0 0 7 4"><path d="M0 0H7L3.5 4Z" fill="#777" /></svg>
    </button>
  </div>
);

const SheetTabs = () => (
  <div className="flex h-7 shrink-0 bg-[#f5f5f5] pr-[21px] text-xs text-[#444]">
    <div className="flex w-[254px] border-t border-[#ababab]">
      <div className="flex h-[25px] w-[100px] items-center">
        <button aria-label="Previous sheet" className="ml-[27px] flex">
          <svg width="4" height="8" viewBox="0 0 4 8"><path d="M4 0V8L0 4Z" fill="#bbb" /></svg>
        </button>
        <button aria-label="Next sheet" className="ml-[25px] flex">
          <svg width="4" height="8" viewBox="0 0 4 8"><path d="M0 0V8L4 4Z" fill="#bbb" /></svg>
        </button>
      </div>
      <span className="mt-[3px] h-5 w-px bg-[#ababab]" />
      <button className="h-[25px] flex-1">Data Entry Purchases</button>
    </div>
    <button className="h-[25px] w-[164px] whitespace-nowrap border-x border-b-2 border-x-[#ababab] border-b-[#217346] bg-white pt-[3px] font-bold text-[#217346]">Summary of Purchases</button>
    <div className="flex flex-1 items-start border-t border-[#ababab]">
      <button aria-label="New sheet" className="ml-8 mt-1 flex">
        <svg width="17" height="17" viewBox="0 0 17 17" fill="none" stroke="#777"><circle cx="8.5" cy="8.5" r="7.5" /><path d="M8.5 5V12M5 8.5H12" strokeWidth="1.8" /></svg>
      </button>
      <div className="ml-auto mr-[15px] mt-2 flex w-[2px] flex-col gap-[2px]">
        <span className="h-[2px] bg-[#aaa]" />
        <span className="h-[2px] bg-[#aaa]" />
        <span className="h-[2px] bg-[#aaa]" />
      </div>
      <div className="mt-[6px] flex h-[15px] w-[370px] bg-[#e8e8e8]">
        <button aria-label="Scroll left" className="flex w-[15px] items-center justify-center border border-[#ababab] bg-white">
          <svg width="4" height="7" viewBox="0 0 4 7"><path d="M4 0V7L0 3.5Z" fill="#666" /></svg>
        </button>
        <span className="mr-[29px] flex-1 border border-[#ababab] bg-white" />
        <button aria-label="Scroll right" className="flex w-[15px] items-center justify-center border border-[#ababab] bg-white">
          <svg width="4" height="7" viewBox="0 0 4 7"><path d="M0 0V7L4 3.5Z" fill="#666" /></svg>
        </button>
      </div>
    </div>
  </div>
);

/* ---------- PivotTable pane ---------- */

const CheckBox = ({ checked, onChange, label, bold }: { checked: boolean; onChange: () => void; label: string; bold?: boolean }) => (
  <label className="flex h-[19px] items-center gap-[6px]">
    <span className="grid place-items-center">
      <input type="checkbox" checked={checked} onChange={onChange} className="col-start-1 row-start-1 h-[13px] w-[13px] appearance-none border border-[#ababab] bg-white" />
      {checked && (
        <svg width="9" height="8" viewBox="0 0 9 8" fill="none" stroke="#777" strokeWidth="1.5" className="pointer-events-none col-start-1 row-start-1"><path d="M1 4L3.5 6.5L8 1" /></svg>
      )}
    </span>
    <span className={bold ? 'font-bold' : ''}>{label}</span>
  </label>
);

const Sigma = () => (
  <svg width="10" height="10" viewBox="0 0 10 10" fill="none" stroke="#999" strokeWidth="1.4"><path d="M9 2.5V1H1.5L5.5 5L1.5 9H9V7.5" /></svg>
);

const FieldButton = ({ label, sigma }: { label: string; sigma?: boolean }) => (
  <button className="flex h-5 w-full items-center whitespace-nowrap border border-[#ababab] bg-white pl-[6px] pr-[9px]">
    {sigma && <span className="ml-[2px] mr-[6px]"><Sigma /></span>}
    {label}
    <svg width="8" height="4" viewBox="0 0 8 4" className="ml-auto"><path d="M0 0H8L4 4Z" fill="#000" /></svg>
  </button>
);

const Area = ({ title, icon, className = '', children }: { title: string; icon: React.ReactNode; className?: string; children?: React.ReactNode }) => (
  <div className={className}>
    <h3 className="flex h-[17px] items-center text-xs">
      <span className="flex w-[22px] pl-1">{icon}</span>
      {title}
    </h3>
    <div className="mt-[5px] flex flex-col gap-px">{children}</div>
  </div>
);

const PivotPane = () => {
  const [fields, setFields] = useState(initialFields);
  const [defer, setDefer] = useState(false);

  const toggle = (name: string) => setFields(fields.map((f) => (f.name === name ? { ...f, checked: !f.checked } : f)));

  return (
    <aside className="mb-[3px] flex w-[260px] shrink-0 flex-col border-l border-[#c6c6c6] bg-white px-[13px] text-[11px] text-[#444]">
      <div className="mt-[11px] flex h-8 items-center">
        <h2 className="flex-1 whitespace-nowrap text-[21px] font-light text-[#217346]">PivotTable Fields</h2>
        <button aria-label="Pane options" className="mb-2 flex"><BigCaret /></button>
        <button aria-label="Close pane" className="mb-2 ml-2 flex">
          <svg width="11" height="10" viewBox="0 0 11 10" stroke="#666" strokeWidth="2"><path d="M1 0.5L10 9.5M10 0.5L1 9.5" /></svg>
        </button>
      </div>
      <div className="mt-1 flex h-[27px] items-center justify-between">
        <span>Choose fields to add to report:</span>
        <button aria-label="Tools" className="flex h-[27px] w-[45px] items-center justify-center gap-2 border border-[#ababab]">
          <svg width="14" height="14" viewBox="0 0 14 14" fill="none" stroke="#999">
            <circle cx="7" cy="7" r="3.6" strokeWidth="2.4" />
            <path d="M7 0V3M7 11V14M1 3.5L3.5 5M10.5 9L13 10.5M1 10.5L3.5 9M10.5 5L13 3.5" strokeWidth="2.6" />
          </svg>
          <svg width="7" height="4" viewBox="0 0 7 4"><path d="M0 0H7L3.5 4Z" fill="#666" /></svg>
        </button>
      </div>
      <div className="mt-[11px] flex-1 bg-[#fcfcfc]">
        {fields.map((f) => (
          <CheckBox key={f.name} label={f.name} checked={f.checked} bold={f.checked} onChange={() => toggle(f.name)} />
        ))}
        <a href="#tables" className="mt-2 flex h-5 items-center">MORE TABLES...</a>
      </div>
      <div className="mt-[15px] border-t border-dotted border-[#c6c6c6]" />
      <p className="flex h-6 items-center pl-[2px]">Drag fields between areas below:</p>
      <div className="ml-px mt-3 border-l border-[#ababab]">
        <div className="grid h-20 grid-cols-[108px_1fr] gap-x-[10px] border-b border-[#ababab]">
          <Area
            title="FILTERS"
            className="px-px"
            icon={<svg width="11" height="11" viewBox="0 0 11 11"><path d="M0 0H11V2L7 6V11H4V6L0 2Z" fill="#999" /></svg>}
          />
          <Area
            title="COLUMNS"
            icon={<svg width="10" height="10" viewBox="0 0 10 10" fill="#999" shapeRendering="crispEdges"><path d="M0 0H3V10H0ZM4 0H5V10H4ZM6 0H7V10H6ZM8 0H9V10H8Z" /></svg>}
          >
            <FieldButton label="Values" sigma />
          </Area>
        </div>
        <div className="grid h-20 grid-cols-[108px_1fr] gap-x-[10px] pt-[6px]">
          <Area
            title="ROWS"
            className="px-px"
            icon={<svg width="10" height="9" viewBox="0 0 10 9" fill="#999" shapeRendering="crispEdges"><path d="M0 0H10V3H0ZM0 4H10V5H0ZM0 6H10V7H0ZM0 8H10V9H0Z" /></svg>}
          >
            <FieldButton label="Items" />
            <FieldButton label="Date" />
          </Area>
          <Area title="VALUES" icon={<Sigma />}>
            <FieldButton label="Sum of Quant..." />
            <FieldButton label="Sum of Total ..." />
          </Area>
        </div>
      </div>
      <div className="mb-[7px] ml-px mt-[19px] flex h-[23px] items-center justify-between">
        <CheckBox label="Defer Layout Update" checked={defer} onChange={() => setDefer(!defer)} />
        <button disabled className="h-[23px] w-[54px] border border-[#dcdcdc] text-[#b0b0b0]">UPDATE</button>
      </div>
    </aside>
  );
};

/* ---------- status bar and taskbar ---------- */

const StatusBar = () => (
  <footer className="flex h-[22px] shrink-0 items-center bg-[#217346] pr-[9px] text-[11px] text-white">
    <span className="w-[53px] pl-[7px]">READY</span>
    <button aria-label="Record macro" className="ml-[7px] flex">
      <svg width="13" height="13" viewBox="0 0 13 13">
        <path d="M1.5 5V12.5H12.5V2.5H7" fill="none" stroke="#fff" />
        <path d="M7 2H13V5H7Z" fill="#fff" />
        <circle cx="3" cy="3" r="3" fill="#fff" />
        <path d="M3 7.5H5M6 7.5H8M9 7.5H11M3 10H5M6 10H8M9 10H11" stroke="#fff" />
      </svg>
    </button>
    <button aria-label="Normal view" className="ml-auto flex h-full w-[38px] items-center justify-center bg-[#0a6332]">
      <svg width="13" height="13" viewBox="0 0 13 13" fill="none" stroke="#fff" shapeRendering="crispEdges"><path d="M0.5 0.5H12.5V12.5H0.5ZM0 4.5H13M0 8.5H13M4.5 0V13M8.5 0V13" /></svg>
    </button>
    <button aria-label="Page layout view" className="flex w-[38px] justify-center">
      <svg width="13" height="13" viewBox="0 0 13 13" fill="none" stroke="#fff" shapeRendering="crispEdges"><path d="M0.5 0.5H12.5V12.5H0.5ZM3.5 2.5H9.5V10.5H3.5ZM5 4.5H8M5 6.5H8M5 8.5H8" /></svg>
    </button>
    <button aria-label="Page break preview" className="flex w-[38px] justify-center">
      <svg width="13" height="13" viewBox="0 0 13 13" shapeRendering="crispEdges"><path d="M0.5 0.5H12.5V12.5H0.5Z" fill="none" stroke="#fff" /><path d="M1 1H5V8H1ZM7 1H12V8H7Z" fill="#fff" /></svg>
    </button>
    <button aria-label="Zoom out" className="ml-1 flex"><span className="h-[2px] w-[6px] bg-white" /></button>
    <div className="relative ml-[5px] flex h-3 w-[100px] items-center">
      <span className="h-px w-full bg-white" />
      <span className="absolute left-12 h-[11px] w-1 bg-white" />
      <input type="range" aria-label="Zoom" className="absolute inset-0 w-full opacity-0" />
    </div>
    <button aria-label="Zoom in" className="ml-1 flex">
      <svg width="8" height="8" viewBox="0 0 8 8" shapeRendering="crispEdges"><path d="M0 4H8M4 0V8" stroke="#fff" strokeWidth="2" /></svg>
    </button>
    <span className="w-[42px] text-right">100%</span>
  </footer>
);

const activeTask = 'rounded-[3px] border border-[#3f4f66] bg-gradient-to-b from-[#dfe7f2] to-[#b4c7e0]';

const Taskbar = () => (
  <div className="flex h-10 shrink-0 border-t border-[#4a6278] bg-[#a6bedb]">
    <div className="flex flex-1 items-center bg-gradient-to-r from-[#8093ab] from-[45px] to-[#a6bedb] to-[80px]">
      <button aria-label="Start" className="ml-2 flex w-[38px]"><StartOrb /></button>
      <button aria-label="Internet Explorer" className="ml-3 flex w-[62px] justify-center"><IELogo /></button>
      <button aria-label="File Explorer" className={`ml-px flex h-full w-[60px] items-center justify-center ${activeTask}`}><ExplorerIcon /></button>
      <button aria-label="Media Player" className="ml-px flex w-[62px] justify-center"><MediaIcon /></button>
      <button aria-label="Chrome" className={`ml-px flex h-full w-[60px] items-center justify-center ${activeTask}`}><ChromeLogo /></button>
      <button aria-label="Calculator" className="flex w-[62px] justify-center"><CalcIcon /></button>
      <button aria-label="Snipping Tool" className="flex w-[64px] justify-center"><SnipIcon /></button>
      <button aria-label="Excel" className={`flex h-full w-[60px] items-center justify-center ${activeTask}`}><ExcelLogo size={31} /></button>
    </div>
    <div className="flex items-center bg-gradient-to-r from-[#a6bedb] to-[#8295ad] to-[40px] pl-[42px] text-white">
      <div className="flex items-center">
        <button aria-label="TeamViewer" className="flex w-6 justify-center">
          <svg width="14" height="14" viewBox="0 0 14 14"><rect width="14" height="14" rx="2" fill="#0d7ae0" /><circle cx="7" cy="7" r="5.5" fill="#fff" /><path d="M1.5 7L5 4.5V6H9V4.5L12.5 7L9 9.5V8H5V9.5Z" fill="#0d5fc0" /></svg>
        </button>
        <button aria-label="Monitor" className="flex w-6 justify-center">
          <svg width="16" height="16" viewBox="0 0 16 16"><circle cx="8" cy="8" r="7.5" fill="#e4e9ec" stroke="#8a9aa5" /><circle cx="8" cy="8" r="5" fill="#2b8fa6" /><circle cx="8" cy="8" r="2.5" fill="#8fe0ee" /></svg>
        </button>
        <button aria-label="Power" className="flex w-6 justify-center">
          <svg width="16" height="16" viewBox="0 0 16 16"><path d="M3 1.5H8V15H2V3H3Z" fill="#777" stroke="#333" /><path d="M8 4H14V8Q14 10 11.5 10V14H8M9.5 4V1M12.5 4V1" fill="#fff" stroke="#333" /><path d="M0.5 7L8 15M8 7L0.5 15" stroke="#e01010" strokeWidth="2.5" /></svg>
        </button>
        <button aria-label="Volume" className="flex w-[25px] justify-center">
          <svg width="14" height="14" viewBox="0 0 14 14"><path d="M1 4.5H4L8 1V13L4 9.5H1Z" fill="#fff" stroke="#444" strokeWidth="0.8" /><path d="M10 4Q12 7 10 10M12 3Q14.5 7 12 11" fill="none" stroke="#fff" /></svg>
        </button>
        <button aria-label="Network" className="flex w-[25px] justify-center">
          <svg width="16" height="13" viewBox="0 0 16 13" fill="#fff" stroke="#555" strokeWidth="0.7"><path d="M0.5 9.5H3V12.5H0.5ZM4 7.5H6.3V12.5H4ZM7 5H9.3V12.5H7ZM10 2.5H12.3V12.5H10ZM13 0.5H15.5V12.5H13Z" /></svg>
        </button>
        <button aria-label="Dictionary" className="flex w-6 justify-center">
          <svg width="17" height="14" viewBox="0 0 17 14">
            <path d="M0.5 6L8.5 13L16.5 8.500V6.500L8.5 11L0.5 4.500Z" fill="#b44b3b" />
            <path d="M0.5 4L4 1.500Q7 1.500 9.500 4Q11.500 2 13.500 3.500L16.500 6.500Q12 7 9 11.500Q5 7 0.5 4Z" fill="#d8eef8" stroke="#3c87a8" />
            <path d="M3 4L9 8.500M5.500 3L10 6.500M11 5.500L13 7" stroke="#5aa3c4" />
          </svg>
        </button>
        <button aria-label="Action Center" className="flex w-6 justify-center">
          <svg width="16" height="16" viewBox="0 0 16 16"><path d="M1.5 0V15" stroke="#fff" strokeWidth="1.8" /><path d="M3 1.5H8Q9 3 14 2V8H3Z" fill="#fff" stroke="#555" strokeWidth="0.6" /><circle cx="10.5" cy="10.5" r="5" fill="#d32a2a" /><path d="M8.5 8.5L12.5 12.5M12.5 8.5L8.5 12.5" stroke="#fff" strokeWidth="1.6" /></svg>
        </button>
      </div>
      <div className="w-[74px] whitespace-nowrap text-center text-[11px] leading-[17px]">
        <div>9:17 PM</div>
        <div>10/29/2015</div>
      </div>
      <button aria-label="Show desktop" className="h-full w-[14px] border border-[#5d6b7d] bg-gradient-to-b from-[#5d6d82] via-[#8e9db2] to-[#59687c]" />
    </div>
  </div>
);

const App = () => (
  <div className="flex h-screen flex-col overflow-hidden bg-white font-['Open_Sans','Noto_Sans',sans-serif]">
    <TitleBar />
    <TabBar />
    <Ribbon />
    <FormulaBar />
    <main className="flex min-h-0 flex-1">
      <div className="flex min-w-0 flex-1 flex-col">
        <div className="flex min-h-0 flex-1 pr-[3px]">
          <Sheet />
          <VerticalScroll />
        </div>
        <SheetTabs />
      </div>
      <PivotPane />
    </main>
    <StatusBar />
    <Taskbar />
  </div>
);

export default App;
